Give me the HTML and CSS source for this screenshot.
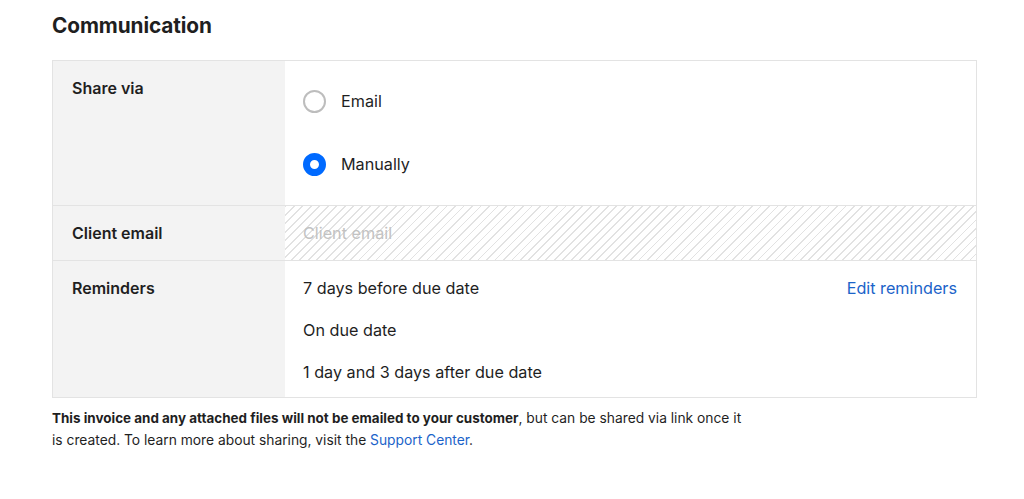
FILE: index.html
```html
<!DOCTYPE html>
<html>
<head>
<meta charset="utf-8">
<link rel="stylesheet" href="styles.css">
</head>
<body>
<div class="page">
  <h1 class="title">Communication</h1>
  <div class="table">
    <div class="row row-share">
      <div class="label">Share via</div>
      <div class="value share-options">
        <label class="radio-row"><span class="radio"></span><span>Email</span></label>
        <label class="radio-row"><span class="radio checked"></span><span>Manually</span></label>
      </div>
    </div>
    <div class="row row-email">
      <div class="label">Client email</div>
      <div class="value hatched"><span class="placeholder">Client email</span></div>
    </div>
    <div class="row row-reminders">
      <div class="label">Reminders</div>
      <div class="value reminders">
        <div class="reminder-list">
          <div class="reminder">7 days before due date</div>
          <div class="reminder">On due date</div>
          <div class="reminder">1 day and 3 days after due date</div>
        </div>
        <a class="link edit">Edit reminders</a>
      </div>
    </div>
  </div>
  <p class="note"><strong>This invoice and any attached files will not be emailed to your customer</strong>, but can be shared via link once it is created. To learn more about sharing, visit the <a class="link">Support Center</a>.</p>
</div>
</body>
</html>
```

FILE: styles.css
```css
* { box-sizing: border-box; }
html, body { margin: 0; padding: 0; background: #fff; }
body {
  font-family: Inter, "Noto Sans", sans-serif;
  color: #1f1f1f;
}
.page {
  padding: 12px 47px 0 52px;
}
.title {
  margin: 0;
  font-size: 20.8px;
  font-weight: 700;
  line-height: 28px;
  letter-spacing: -0.1px;
}
.table {
  margin-top: 20px;
  border: 1px solid #e3e3e3;
  width: 925px;
}
.row {
  display: grid;
  grid-template-columns: 232px 1fr;
}
.row + .row .label,
.row + .row .value {
  border-top: 1px solid #e3e3e3;
}
.label {
  background: #f3f3f3;
  padding: 17px 19px;
  font-size: 16px;
  font-weight: 600;
  line-height: 20px;
}
.value {
  font-size: 16.2px;
  line-height: 20px;
}
.row-share { height: 144px; }
.share-options {
  padding: 30px 18px 0;
  display: flex;
  flex-direction: column;
  gap: 43px;
}
.radio-row {
  display: flex;
  align-items: center;
  gap: 15px;
  height: 20px;
}
.radio {
  width: 23px;
  height: 23px;
  border-radius: 50%;
  border: 2px solid #bdbdbd;
  background: #fff;
  flex: none;
}
.radio.checked {
  border: 7px solid #006aff;
}
.row-email { height: 55px; }
.row-email .label { padding-top: 17px; }
.hatched {
  background: repeating-linear-gradient(135deg, #e2e2e2 0 1.2px, #fff 1.2px 6px);
  padding: 17px 18px;
}
.placeholder { color: #c2c2c2; }
.row-reminders { height: 137px; }
.reminders {
  display: flex;
  justify-content: space-between;
  padding: 17px 19px 0 18px;
}
.reminder-list {
  display: flex;
  flex-direction: column;
  gap: 22px;
}
.link { color: #1b63c9; text-decoration: none; }
.note {
  margin: 9px 0 0;
  width: 695px;
  font-size: 13.8px;
  line-height: 22px;
  color: #1f1f1f;
}
.note strong { font-weight: 700; font-size: 13.45px; }
```
